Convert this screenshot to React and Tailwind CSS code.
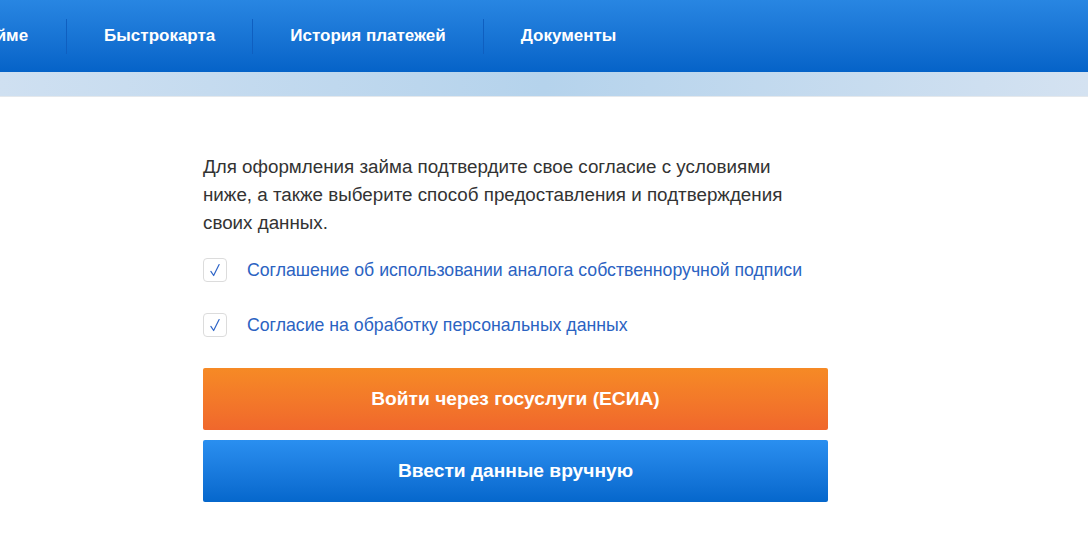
export default function App() {
  const nav = ["О займе", "Быстрокарта", "История платежей", "Документы"];
  const checks = [
    "Соглашение об использовании аналога собственноручной подписи",
    "Согласие на обработку персональных данных",
  ];
  return (
    <div className="w-[1088px] h-[553px] overflow-hidden bg-white font-['Liberation_Sans',Arial,sans-serif]">
      {/* top menu */}
      <header className="h-[72px] bg-gradient-to-b from-[#2886e2] to-[#0563c8] shadow-[0_1px_2px_rgba(0,0,0,0.15)] overflow-hidden">
        <nav className="flex items-center h-full -ml-[40px]">
          {nav.map((item, i) => (
            <div key={item} className="flex items-center h-full">
              {i > 0 && <span className="w-px h-[35px] bg-[#0f5fc0]" />}
              <a className={`text-white font-bold text-[17px] ${i === 0 ? "pr-[38px]" : "px-[37px]"}`}>{item}</a>
            </div>
          ))}
        </nav>
      </header>

      {/* sky band */}
      <div className="h-[25px] bg-gradient-to-r from-[#cfe0f1] via-[#b5d3ec] to-[#d4e2f1] border-b border-[#e4e8ec]" />

      <main className="w-[625px] ml-[203px] pt-[56px]">
        <p className="w-[600px] text-[18.8px] leading-[28px] text-[#333]">
          Для оформления займа подтвердите свое согласие с условиями ниже, а также выберите способ предоставления и подтверждения своих данных.
        </p>

        <div className="mt-[21px] flex flex-col gap-[31px]">
          {checks.map((c) => (
            <label key={c} className="flex items-center gap-[20px]">
              <span className="w-[24px] h-[24px] rounded-[4px] border border-[#dcdcdc] flex items-center justify-center">
                <svg width="24" height="24" viewBox="0 0 24 24" fill="none">
                  <path d="M7.5 13.5 L10.5 18 L16.5 6" stroke="#2f66c8" strokeWidth="1.3" strokeLinecap="round" strokeLinejoin="round" />
                </svg>
              </span>
              <span className="text-[17.7px] leading-[24px] text-[#2b63c2]">{c}</span>
            </label>
          ))}
        </div>

        <div className="mt-[31px] flex flex-col gap-[10px]">
          <button className="h-[62px] rounded-[2px] bg-gradient-to-b from-[#f68a25] to-[#f0672c] text-white font-bold text-[19.2px]">
            Войти через госуслуги (ЕСИА)
          </button>
          <button className="h-[62px] rounded-[2px] bg-gradient-to-b from-[#2a8ff0] to-[#0567cc] text-white font-bold text-[19.2px]">
            Ввести данные вручную
          </button>
        </div>
      </main>
    </div>
  );
}
